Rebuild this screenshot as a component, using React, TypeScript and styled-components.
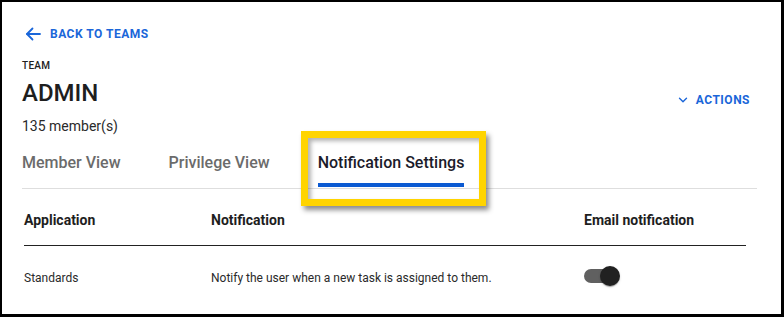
import React from "react";
import styled, { createGlobalStyle } from "styled-components";

const Global = createGlobalStyle`
  * { box-sizing: border-box; }
  html, body { margin: 0; padding: 0; background: #fff; }
  body { font-family: Roboto, "Liberation Sans", Arial, sans-serif; }
`;

const Frame = styled.div`
  position: relative;
  width: 784px;
  height: 317px;
  overflow: hidden;
  background: #fff;
  border-style: solid;
  border-color: #000;
  border-width: 2px 3px 3px 2px;
  padding: 22px 24px 0 20px;
  display: flex;
  flex-direction: column;
`;

const BackLink = styled.a`
  display: flex;
  align-items: center;
  height: 20px;
  margin-left: 3px;
  color: #1a66d9;
  font-size: 12px;
  font-weight: 700;
  letter-spacing: 0.5px;
  line-height: 20px;
  text-decoration: none;
  text-transform: uppercase;
  gap: 9px;
`;

const HeaderRow = styled.div`
  display: flex;
  align-items: center;
  justify-content: space-between;
  margin-top: 16px;
`;

const TitleBlock = styled.div`
  display: flex;
  flex-direction: column;
`;

const Overline = styled.div`
  font-size: 10px;
  font-weight: 500;
  line-height: 12px;
  color: #212121;
  letter-spacing: 0.3px;
`;

const Title = styled.h1`
  margin: 7px 0 0;
  font-size: 24px;
  font-weight: 500;
  line-height: 28px;
  color: #1e1e1e;
`;

const Members = styled.div`
  margin-top: 9px;
  font-size: 14px;
  line-height: 20px;
  color: #2a2a2a;
`;

const ActionsButton = styled.button`
  display: flex;
  align-items: center;
  gap: 6px;
  border: 0;
  background: transparent;
  padding: 6px 7px 6px 4px;
  margin-top: 4px;
  color: #1a66d9;
  font-family: inherit;
  font-size: 12px;
  font-weight: 700;
  letter-spacing: 0.5px;
  line-height: 20px;
`;

const TabBar = styled.div`
  display: flex;
  gap: 48px;
  margin-top: 17px;
  border-bottom: 1px solid #dedede;
`;

const Tab = styled.div<{ $active?: boolean }>`
  position: relative;
  font-size: 16px;
  font-weight: 500;
  line-height: 20px;
  padding-bottom: 15px;
  color: ${(p) => (p.$active ? "#1b1b2a" : "#6b6b6b")};
  &::after {
    content: "";
    display: ${(p) => (p.$active ? "block" : "none")};
    position: absolute;
    left: 0;
    right: 0;
    bottom: 1px;
    height: 4px;
    background: #0b5ad2;
  }
`;

const Table = styled.div`
  margin: 0 11px 0 2px;
  display: flex;
  flex-direction: column;
`;

const Row = styled.div<{ $head?: boolean }>`
  display: grid;
  grid-template-columns: 187px 373px 1fr;
  align-items: center;
  padding: ${(p) => (p.$head ? "21px 0 15px" : "20px 0")};
  border-bottom: ${(p) => (p.$head ? "1px solid #222" : "0")};
`;

const HeadCell = styled.div`
  font-size: 14px;
  font-weight: 700;
  line-height: 20px;
  color: #1e1e1e;
`;

const Cell = styled.div`
  font-size: 12px;
  line-height: 16px;
  padding-top: 4px;
  color: #2a2a2a;
`;

const SwitchTrack = styled.div`
  position: relative;
  width: 34px;
  height: 14px;
  border-radius: 7px;
  background: #606060;
  margin: 3px 0;
`;

const SwitchThumb = styled.div`
  position: absolute;
  left: 16px;
  top: -3px;
  width: 20px;
  height: 20px;
  border-radius: 50%;
  background: #212121;
  box-shadow: 0 2px 1px -1px rgba(0, 0, 0, 0.2), 0 1px 1px 0 rgba(0, 0, 0, 0.14),
    0 1px 3px 0 rgba(0, 0, 0, 0.12);
`;

const Highlight = styled.div`
  position: absolute;
  left: 299px;
  top: 129px;
  width: 185px;
  height: 75px;
  border: 7px solid #ffd400;
  box-shadow: 3px 4px 5px rgba(0, 0, 0, 0.45), inset 3px 3px 4px rgba(0, 0, 0, 0.3);
  pointer-events: none;
`;

const BackArrow = () => (
  <svg width="16" height="14" viewBox="0 0 16 14" fill="none" stroke="currentColor" strokeWidth="1.8" strokeLinecap="round" strokeLinejoin="round">
    <path d="M15 7H2" />
    <path d="M7.5 1.5L2 7l5.5 5.5" />
  </svg>
);

const Chevron = () => (
  <svg width="14" height="14" viewBox="0 0 24 24" fill="none" stroke="currentColor" strokeWidth="2.4" strokeLinecap="round" strokeLinejoin="round">
    <path d="m6 9 6 6 6-6" />
  </svg>
);

export default function App() {
  return (
    <>
      <Global />
      <Frame>
        <BackLink href="#">
          <BackArrow />
          Back to Teams
        </BackLink>
        <HeaderRow>
          <TitleBlock>
            <Overline>TEAM</Overline>
            <Title>ADMIN</Title>
            <Members>135 member(s)</Members>
          </TitleBlock>
          <ActionsButton>
            <Chevron />
            ACTIONS
          </ActionsButton>
        </HeaderRow>
        <TabBar>
          <Tab>Member View</Tab>
          <Tab>Privilege View</Tab>
          <Tab $active>Notification Settings</Tab>
        </TabBar>
        <Table>
          <Row $head>
            <HeadCell>Application</HeadCell>
            <HeadCell>Notification</HeadCell>
            <HeadCell>Email notification</HeadCell>
          </Row>
          <Row>
            <Cell>Standards</Cell>
            <Cell>Notify the user when a new task is assigned to them.</Cell>
            <div>
              <SwitchTrack>
                <SwitchThumb />
              </SwitchTrack>
            </div>
          </Row>
        </Table>
        <Highlight />
      </Frame>
    </>
  );
}
